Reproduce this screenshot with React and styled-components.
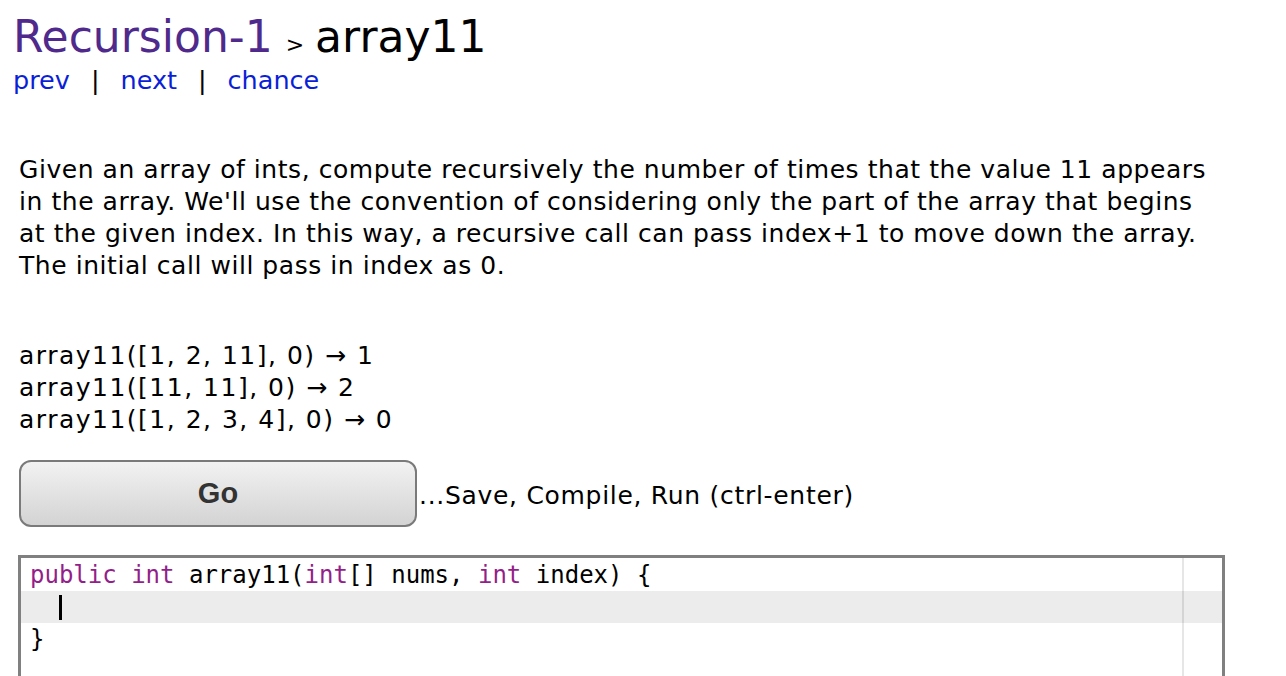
import React from "react";
import styled, { createGlobalStyle } from "styled-components";

const Global = createGlobalStyle`
  html, body { margin: 0; padding: 0; background: #fff; overflow: hidden; }
  body { font-family: "DejaVu Sans", Verdana, sans-serif; color: #000; }
`;

const Page = styled.div`
  padding: 12px 0 0 13px;
  width: 1273px;
  height: 664px;
  overflow: hidden;
`;

const Title = styled.h1`
  margin: 0;
  font-weight: normal;
  font-size: 44px;
  line-height: 50px;
  white-space: nowrap;
  display: flex;
  align-items: baseline;
`;

const Section = styled.span`
  color: #4f2a8c;
`;

const Sep = styled.span`
  font-size: 22px;
  margin: 0 11px 0 13px;
  color: #000;
`;

const Problem = styled.span`
  color: #000;
`;

const Nav = styled.nav`
  margin-top: -5px;
  font-size: 25.5px;
  line-height: 30px;
  display: flex;
  gap: 21px;
`;

const NavLink = styled.a`
  color: #0b1fd8;
  text-decoration: none;
`;

const Bar = styled.span`
  color: #000;
`;

const Body = styled.div`
  padding-left: 6px;
`;

const Description = styled.p`
  margin: 59px 0 0 0;
  font-size: 25px;
  letter-spacing: 0.55px;
  line-height: 32px;
  white-space: nowrap;
`;

const Examples = styled.div`
  margin-top: 58px;
  font-size: 25px;
  letter-spacing: 1.5px;
  line-height: 32px;
  white-space: nowrap;
`;

const GoRow = styled.div`
  margin-top: 24px;
  display: flex;
  align-items: center;
  gap: 2px;
`;

const GoButton = styled.button`
  box-sizing: border-box;
  width: 398px;
  height: 67px;
  border: 2px solid #7a7a7a;
  border-radius: 12px;
  background: linear-gradient(#f2f2f2, #d3d3d3);
  font-family: "Liberation Sans", Arial, sans-serif;
  font-weight: bold;
  font-size: 29px;
  color: #333;
  padding: 0;
  cursor: pointer;
`;

const Hint = styled.span`
  font-size: 25px;
  letter-spacing: 0.7px;
  line-height: 32px;
  padding-top: 4px;
`;

const Editor = styled.div`
  margin-top: 28px;
  margin-left: -1px;
  width: 1201px;
  height: 200px;
  border: 3px solid #808080;
  position: relative;
  padding-top: 1px;
  font-family: "DejaVu Sans Mono", Menlo, monospace;
  font-size: 24px;
  background: #fff;
`;

const PrintMargin = styled.div`
  position: absolute;
  top: 0;
  bottom: 0;
  left: 1161px;
  width: 2px;
  background: #e6e6e6;
`;

const Line = styled.div`
  position: relative;
  height: 32px;
  line-height: 32px;
  padding-left: 9px;
  white-space: pre;
  background: ${(p) => (p.$active ? "rgba(0,0,0,0.075)" : "transparent")};
`;

const Kw = styled.span`
  color: #931f8a;
`;

const Cursor = styled.span`
  position: absolute;
  left: 38px;
  top: 4px;
  width: 3px;
  height: 25px;
  background: #000;
`;

export default function App() {
  return (
    <>
      <Global />
      <Page>
        <Title>
          <Section>Recursion-1</Section>
          <Sep>&gt;</Sep>
          <Problem>array11</Problem>
        </Title>
        <Nav>
          <NavLink href="#">prev</NavLink>
          <Bar>|</Bar>
          <NavLink href="#">next</NavLink>
          <Bar>|</Bar>
          <NavLink href="#">chance</NavLink>
        </Nav>
        <Body>
          <Description>
            Given an array of ints, compute recursively the number of times that the value 11 appears
            <br />
            in the array. We'll use the convention of considering only the part of the array that begins
            <br />
            at the given index. In this way, a recursive call can pass index+1 to move down the array.
            <br />
            The initial call will pass in index as 0.
          </Description>
          <Examples>
            array11([1, 2, 11], 0) → 1
            <br />
            array11([11, 11], 0) → 2
            <br />
            array11([1, 2, 3, 4], 0) → 0
          </Examples>
          <GoRow>
            <GoButton>Go</GoButton>
            <Hint>...Save, Compile, Run (ctrl-enter)</Hint>
          </GoRow>
          <Editor>
            <PrintMargin />
            <Line>
              <Kw>public</Kw> <Kw>int</Kw> array11(<Kw>int</Kw>[] nums, <Kw>int</Kw> index) {"{"}
            </Line>
            <Line $active>
              {"  "}
              <Cursor />
            </Line>
            <Line>{"}"}</Line>
          </Editor>
        </Body>
      </Page>
    </>
  );
}
